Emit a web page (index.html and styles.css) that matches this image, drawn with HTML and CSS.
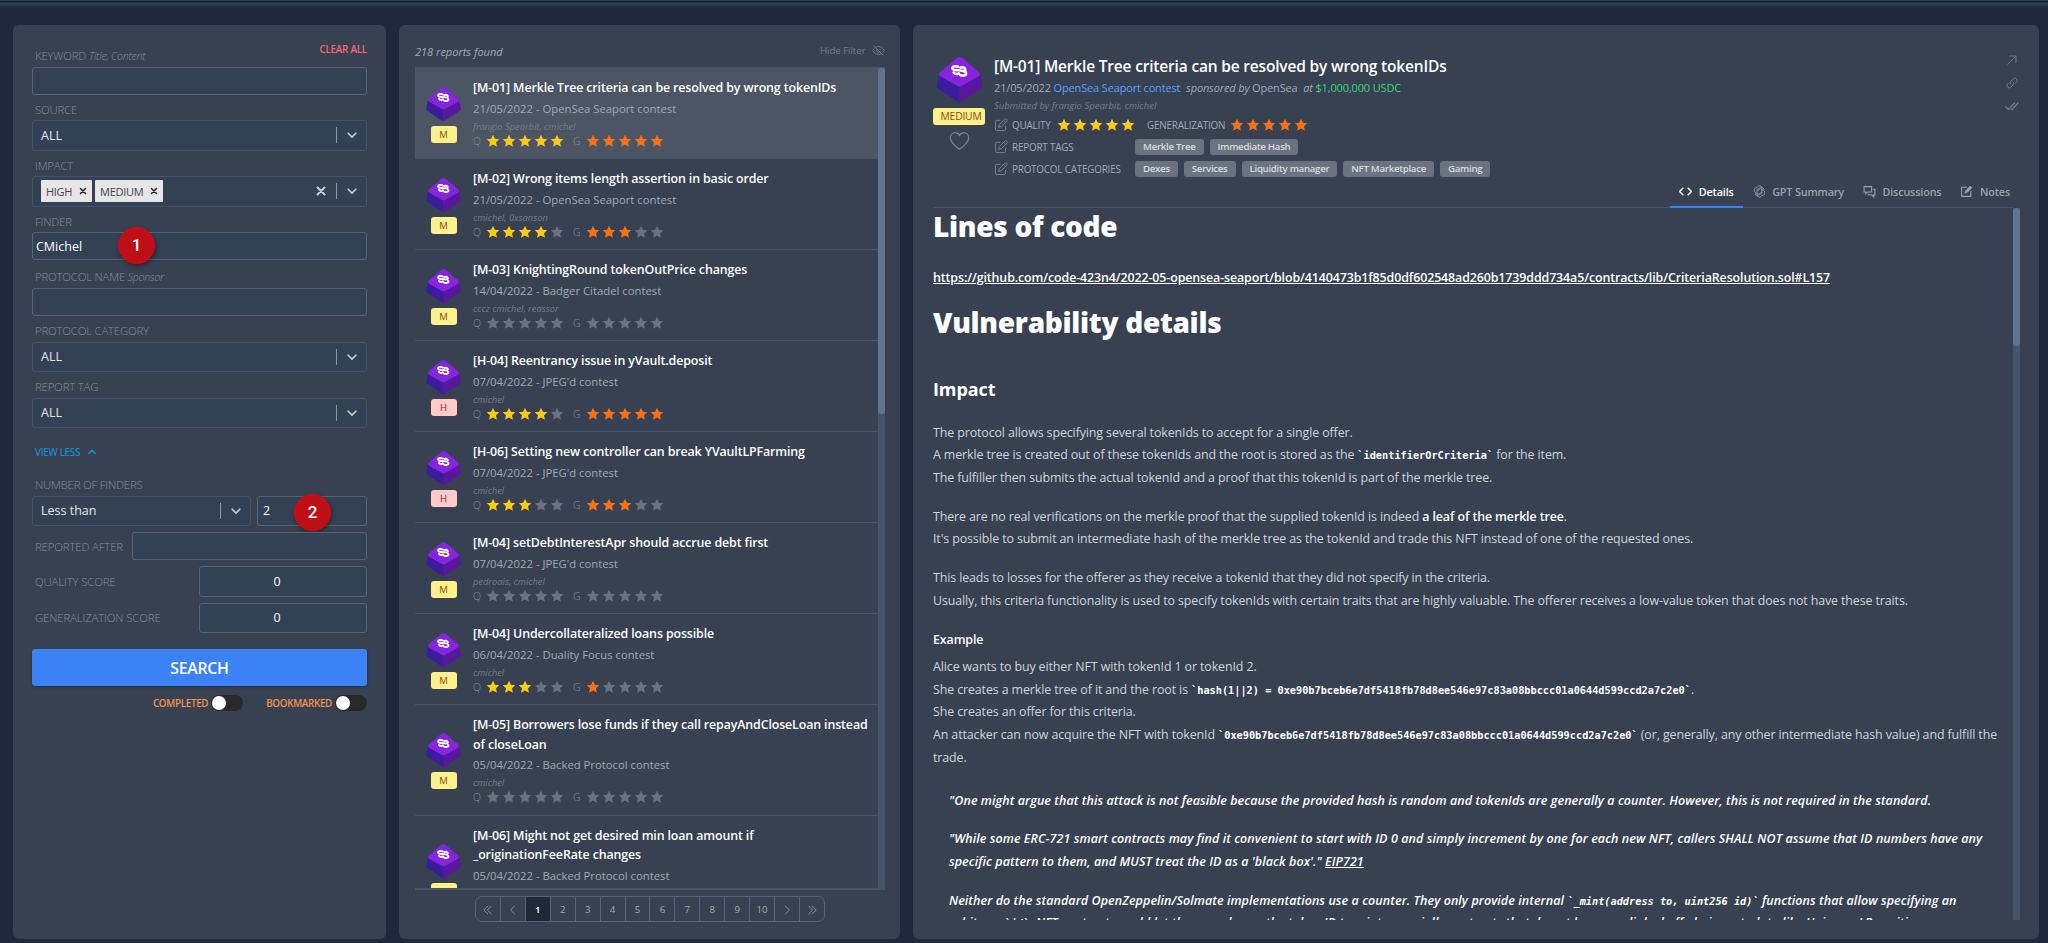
FILE: index.html
```html
<!DOCTYPE html>
<html lang="en">
<head>
    <meta charset="UTF-8">
    <meta name="viewport" content="width=device-width, initial-scale=1.0">
    <title>Reports</title>
    <link rel="stylesheet" href="styles.css">
</head>
<body>
    <!-- Icons -->
    <svg class="sprite">
        <symbol id="star" viewBox="0 0 24 24"><path d="M12 1.2l3.2 7 7.6.9-5.6 5.2 1.5 7.6L12 18.1l-6.7 3.8 1.5-7.6L1.2 9.1l7.6-.9z" stroke-linejoin="round"/></symbol>
        <symbol id="chevron" viewBox="0 0 20 20"><path d="M4.5 7.5L10 13l5.5-5.5" fill="none" stroke="currentColor" stroke-width="2.4" stroke-linecap="round"/></symbol>
        <symbol id="cross" viewBox="0 0 20 20"><path d="M5 5l10 10M15 5L5 15" fill="none" stroke="currentColor" stroke-width="3" stroke-linecap="round"/></symbol>
        <symbol id="edit" viewBox="0 0 24 24"><path d="M11 4H5a2.5 2.5 0 0 0-2.500 2.500V19A2.500 2.500 0 0 0 5 21.500h12.500A2.500 2.500 0 0 0 20 19v-6M8 16l1-4.500L18.500 2a2.300 2.300 0 0 1 3.500 3.500L12.500 15z" fill="none" stroke="currentColor" stroke-width="1.6" stroke-linejoin="round"/><path d="M16.500 4l3.500 3.500" stroke="currentColor" stroke-width="1.500"/></symbol>
        <symbol id="cube" viewBox="0 0 35 34">
            <path d="M2 13.500L17.500 22v12q-1 0-2-.7L1.200 23.800q-1.200-.8-1-2.200z" fill="#3b1c9c"/>
            <path d="M33 13.500L17.500 22v12q1 0 2-.7l14.300-9.500q1.200-.8 1-2.200z" fill="#58179c"/>
            <path d="M15.700.6q1.800-1.200 3.600 0l13 11q1.400 1.400 0 2.800L19 22q-1.500.8-3 0L2.700 14.400q-1.400-1.400 0-2.800z" fill="#8724e0"/>
            <path d="M16.500 7.400c-1.800-.9-4.400-.4-4.400 1.100 0 1.700 3 1.300 5.400 1.600 2.600.2 5 .3 5 2.300 0 1.600-2.400 2-4.400 1.300M13 11.700c.8 1.400 2.800 1.600 4 .6M18.200 8c1.700-.7 3.300-.1 3.700 1.200" fill="none" stroke="#fff" stroke-width="1.900" stroke-linecap="round"/>
        </symbol>
    </svg>

    <div class="topbar"></div>

    <main class="layout">
        <!-- Filters -->
        <section class="panel filters">
            <div class="label first"><span>KEYWORD <em>Title, Content</em></span><a class="clear">CLEAR ALL</a></div>
            <div class="input"></div>
            <div class="label">SOURCE</div>
            <div class="select"><span>ALL</span><i class="sep"></i><svg><use href="#chevron"/></svg></div>
            <div class="label">IMPACT</div>
            <div class="select">
                <span class="chips"><b>HIGH<svg><use href="#cross"/></svg></b><b>MEDIUM<svg><use href="#cross"/></svg></b></span>
                <svg class="reset"><use href="#cross"/></svg><i class="sep"></i><svg><use href="#chevron"/></svg>
            </div>
            <div class="label">FINDER</div>
            <div class="input">CMichel<span class="marker marker-one">1</span></div>
            <div class="label sponsor"><span>PROTOCOL NAME <em>Sponsor</em></span></div>
            <div class="input"></div>
            <div class="label">PROTOCOL CATEGORY</div>
            <div class="select"><span>ALL</span><i class="sep"></i><svg><use href="#chevron"/></svg></div>
            <div class="label">REPORT TAG</div>
            <div class="select"><span>ALL</span><i class="sep"></i><svg><use href="#chevron"/></svg></div>
            <a class="view-less">VIEW LESS <svg><use href="#chevron"/></svg></a>
            <div class="label">NUMBER OF FINDERS</div>
            <div class="row">
                <div class="select less"><span>Less than</span><i class="sep"></i><svg><use href="#chevron"/></svg></div>
                <div class="input count">2<span class="marker marker-two">2</span></div>
            </div>
            <div class="row after"><span class="name">REPORTED AFTER</span><div class="input"></div></div>
            <div class="row score"><span class="name">QUALITY SCORE</span><div class="input">0</div></div>
            <div class="row score"><span class="name">GENERALIZATION SCORE</span><div class="input">0</div></div>
            <button class="search">SEARCH</button>
            <div class="toggles">
                <label>COMPLETED<i></i></label>
                <label>BOOKMARKED<i></i></label>
            </div>
        </section>

        <!-- Report list -->
        <section class="panel reports">
            <div class="reports-head">
                <em>218 reports found</em>
                <span>Hide Filter <svg viewBox="0 0 24 24"><path d="M4 8c-1 1.200-2 2.600-2.500 4 2 4.500 6 7.500 10.500 7.500 2 0 3.800-.5 5.400-1.500M8 5.200c1.300-.5 2.600-.7 4-.7 4.500 0 8.500 3 10.500 7.500-.6 1.400-1.500 2.700-2.600 3.800M3 3l18 18M9.500 9.500a3.500 3.500 0 0 0 5 5M14 9a3.500 3.500 0 0 1 1.500 2.500" fill="none" stroke="currentColor" stroke-width="1.700"/></svg></span>
            </div>
            <div class="scroller list-scroller">
                <div class="list" id="list"></div>
                <div class="scrollbar"><div class="thumb"></div></div>
            </div>
            <div class="pages">
                <span><svg viewBox="0 0 20 20"><path d="M10 3l-7 7 7 7M16 3l-7 7 7 7"/></svg></span>
                <span><svg viewBox="0 0 20 20"><path d="M13 3l-7 7 7 7"/></svg></span>
                <span class="current">1</span><span>2</span><span>3</span><span>4</span><span>5</span><span>6</span><span>7</span><span>8</span><span>9</span><span>10</span>
                <span><svg viewBox="0 0 20 20"><path d="M7 3l7 7-7 7"/></svg></span>
                <span><svg viewBox="0 0 20 20"><path d="M4 3l7 7-7 7M10 3l7 7-7 7"/></svg></span>
            </div>
        </section>

        <!-- Report detail -->
        <section class="panel detail">
            <header class="detail-head">
                <div class="side">
                    <svg class="big-cube"><use href="#cube"/></svg>
                    <span class="badge">MEDIUM</span>
                    <svg class="heart" viewBox="0 0 24 22"><path d="M12 20.500C6 16 1.500 12 1.500 7.500c0-3.500 2.500-6 5.500-6 2.200 0 4 1.300 5 3.300 1-2 2.800-3.300 5-3.300 3 0 5.500 2.500 5.500 6 0 4.500-4.500 8.500-10.500 13z"/></svg>
                </div>
                <div class="info">
                    <h2>[M-01] Merkle Tree criteria can be resolved by wrong tokenIDs</h2>
                    <p class="meta">21/05/2022 <a>OpenSea Seaport contest</a> <em>sponsored by</em> OpenSea <em class="at">at</em> <strong>$1,000,000 USDC</strong></p>
                    <p class="authors">Submitted by frangio Spearbit, cmichel</p>
                    <div class="attr">
                        <svg class="edit"><use href="#edit"/></svg><span class="quality">QUALITY</span><span class="stars" data-score="5"></span>
                        <span class="general">GENERALIZATION</span><span class="stars orange" data-score="5"></span>
                    </div>
                    <div class="attr">
                        <svg class="edit"><use href="#edit"/></svg><span class="attr-name">REPORT TAGS</span>
                        <b>Merkle Tree</b><b>Immediate Hash</b>
                    </div>
                    <div class="attr">
                        <svg class="edit"><use href="#edit"/></svg><span class="attr-name">PROTOCOL CATEGORIES</span>
                        <b>Dexes</b><b>Services</b><b>Liquidity manager</b><b>NFT Marketplace</b><b>Gaming</b>
                    </div>
                </div>
                <div class="actions">
                    <svg viewBox="0 0 24 24"><path d="M3 21L20 4M6 4h14v14"/></svg>
                    <svg viewBox="0 0 24 24"><path d="M10 14.500a4.600 4.600 0 0 1 0-6.500l4.500-4.500a4.600 4.600 0 0 1 6.500 6.500l-3 3M14 9.500a4.600 4.600 0 0 1 0 6.500l-4.500 4.500A4.600 4.600 0 0 1 3 14l3-3"/></svg>
                    <svg class="checks" viewBox="0 0 28 24"><path d="M1 13l6 6L20 5M12 18l2 1.500L27 5"/></svg>
                </div>
            </header>
            <nav class="tabs">
                <a class="active"><svg viewBox="0 0 24 24"><path d="M8 5l-7 7 7 7M16 5l7 7-7 7" stroke-width="2.500"/></svg>Details</a>
                <a><svg viewBox="0 0 24 24"><path d="M12 22.500a4.500 4.500 0 0 1-4.500-4.500v-7l5-3M7.500 11V8.500l6-3.400a4.500 4.500 0 0 1 6.700 4"/><path d="M12 1.500A4.500 4.500 0 0 1 16.500 6v7l-5 3M16.500 13v2.500l-6 3.400a4.500 4.500 0 0 1-6.700-4"/><path d="M3 7.500a4.500 4.500 0 0 1 4.500-3M3 7.500c-1.500 2.500-.8 5 1 6.300l6.500 3.500M21 16.500a4.500 4.500 0 0 1-4.500 3M21 16.500c1.500-2.500.8-5-1-6.300l-6.500-3.500M7.500 5c.8-2.200 2.600-3.500 4.500-3.500M16.500 19c-.8 2.200-2.600 3.500-4.500 3.500"/></svg>GPT Summary</a>
                <a><svg viewBox="0 0 24 24"><path d="M2 3h14v10H8l-3 3v-3H2zM19 8h3v10h-2v4l-4-4h-6v-2" stroke-width="2"/></svg>Discussions</a>
                <a class="notes"><svg viewBox="0 0 24 24"><path d="M13 4H3v17h17V11" stroke-width="2"/><path d="M9 15l1-4L19 2l3 3-9 9z" fill="currentColor"/></svg>Notes</a>
            </nav>
            <div class="scroller detail-scroller">
                <article class="content">
                    <h1>Lines of code</h1>
                    <p class="source"><a>https://github.com/code-423n4/2022-05-opensea-seaport/blob/4140473b1f85d0df602548ad260b1739ddd734a5/contracts/lib/CriteriaResolution.sol#L157</a></p>
                    <h1>Vulnerability details</h1>
                    <h3>Impact</h3>
                    <p>The protocol allows specifying several tokenIds to accept for a single offer.<br>
                    A merkle tree is created out of these tokenIds and the root is stored as the <code>`identifierOrCriteria`</code> for the item.<br>
                    The fulfiller then submits the actual tokenId and a proof that this tokenId is part of the merkle tree.</p>
                    <p>There are no real verifications on the merkle proof that the supplied tokenId is indeed <b>a leaf of the merkle tree</b>.<br>
                    It's possible to submit an intermediate hash of the merkle tree as the tokenId and trade this NFT instead of one of the requested ones.</p>
                    <p>This leads to losses for the offerer as they receive a tokenId that they did not specify in the criteria.<br>
                    Usually, this criteria functionality is used to specify tokenIds with certain traits that are highly valuable. The offerer receives a low-value token that does not have these traits.</p>
                    <h4>Example</h4>
                    <p>Alice wants to buy either NFT with tokenId 1 or tokenId 2.<br>
                    She creates a merkle tree of it and the root is <code>`hash(1||2) = 0xe90b7bceb6e7df5418fb78d8ee546e97c83a08bbccc01a0644d599ccd2a7c2e0`</code>.<br>
                    She creates an offer for this criteria.<br>
                    An attacker can now acquire the NFT with tokenId <code>`0xe90b7bceb6e7df5418fb78d8ee546e97c83a08bbccc01a0644d599ccd2a7c2e0`</code> (or, generally, any other intermediate hash value) and fulfill the<br>trade.</p>
                    <blockquote>
                        <p>"One might argue that this attack is not feasible because the provided hash is random and tokenIds are generally a counter. However, this is not required in the standard.</p>
                        <p>"While some ERC-721 smart contracts may find it convenient to start with ID 0 and simply increment by one for each new NFT, callers SHALL NOT assume that ID numbers have any<br>specific pattern to them, and MUST treat the ID as a 'black box'." <a>EIP721</a></p>
                        <p>Neither do the standard OpenZeppelin/Solmate implementations use a counter. They only provide internal <code>`_mint(address to, uint256 id)`</code> functions that allow specifying an<br>arbitrary <code>`id`</code>. NFT contracts could let the user choose the token ID to mint, especially contracts that do not have any linked off-chain metadata like Uniswap LP positions.</p>
                    </blockquote>
                </article>
                <div class="scrollbar"><div class="thumb"></div></div>
            </div>
        </section>
    </main>

    <script src="script.js"></script>
</body>
</html>
```
FILE: styles.css
```css
* {
    margin: 0;
    padding: 0;
    box-sizing: border-box;
}

body {
    background: #1e293b;
    color: #d1d5db;
    font-family: "Open Sans", "Noto Sans", sans-serif;
    font-size: 12.5px;
    height: 943px;
    overflow: hidden;
}

.sprite {
    display: none;
}

.topbar {
    height: 8px;
    background: linear-gradient(#29384b 0 1px, #172235 1px 2px, #30445a 3px, #1e293b 8px);
}

.layout {
    display: flex;
    gap: 13px;
    padding: 17px 9px 0 13px;
}

.panel {
    height: 914px;
    background: #374151;
    border-radius: 6px;
}

/* Filters */
.filters {
    width: 373px;
    padding: 16px 19px 0;
    display: flex;
    flex-direction: column;
}

.label {
    height: 25.8px;
    padding: 4px 0 0 3px;
    line-height: 21px;
    font-size: 11.4px;
    font-weight: 300;
    color: #858e9c;
    letter-spacing: -0.2px;
    display: flex;
    justify-content: space-between;
    flex-shrink: 0;
}

.label em {
    font-size: 10.5px;
}

.label.sponsor {
    height: 28px;
    padding-top: 6px;
}

.clear {
    color: #f26b6f;
    font-size: 9.8px;
    font-weight: 600;
    line-height: 9px;
}

.input, .select {
    background: #334155;
    border: 1px solid #566479;
    border-radius: 3px;
    height: 27.8px;
    display: flex;
    align-items: center;
    color: #fff;
    flex-shrink: 0;
}

.input {
    position: relative;
    padding-left: 3px;
}

.select {
    height: 30.2px;
    border-color: #43536a;
    padding: 0 7px 0 8px;
    color: #e5e7eb;
}

.select span {
    flex: 1;
}

.select svg {
    width: 14px;
    height: 14px;
    color: #ccc;
}

.sep {
    width: 1px;
    height: 16px;
    background: #8e99a8;
    margin-right: 8px;
}

.select .reset {
    width: 14px;
    height: 14px;
    margin-right: 8px;
}

.chips {
    display: flex;
    gap: 3px;
}

.chips b {
    height: 22px;
    padding: 0 4px 0 5px;
    background: #e6e6e6;
    color: #444;
    font-size: 11px;
    font-weight: 400;
    letter-spacing: -0.3px;
    display: flex;
    align-items: center;
    gap: 6px;
    border-radius: 1px;
}

.chips b svg {
    width: 10px;
    height: 10px;
    color: #222;
}

.marker {
    position: absolute;
    width: 37px;
    height: 37px;
    border-radius: 50%;
    background: #bd0f15;
    border: 1px solid #e3070f;
    box-shadow: 1px 2px 4px rgba(0, 0, 0, 0.4);
    font: 500 17px/34px Roboto, sans-serif;
    text-align: center;
}

.marker-one {
    left: 85px;
    top: -6px;
}

.marker-two {
    left: 36px;
    top: -3px;
}

.view-less {
    height: 42px;
    padding: 14px 0 0 3px;
    line-height: 21px;
    color: #1597e5;
    font-size: 10px;
    letter-spacing: -0.3px;
}

.view-less svg {
    width: 12px;
    height: 12px;
    margin-left: 4px;
    vertical-align: -2px;
    transform: rotate(180deg);
}

.row {
    display: flex;
    align-items: center;
    justify-content: space-between;
}

.less {
    width: 219px;
}

.count {
    width: 110px;
    height: 30.2px;
    padding-left: 5px;
}

.name {
    padding-left: 3px;
    font-size: 11.4px;
    font-weight: 300;
    color: #858e9c;
    letter-spacing: -0.15px;
}

.after {
    margin-top: 6.5px;
}

.after .input {
    width: 235px;
}

.score {
    margin-top: 5.8px;
}

.score .input {
    width: 168px;
    height: 30.8px;
    justify-content: center;
    padding-right: 12px;
    padding-left: 0;
}

.search {
    margin-top: 16px;
    height: 37px;
    flex-shrink: 0;
    border: none;
    border-radius: 3px;
    background: #3b82f6;
    color: #fff;
    font-family: inherit;
    font-size: 15.8px;
    font-weight: 600;
    letter-spacing: -0.25px;
    box-shadow: 0 1px 3px rgba(0, 0, 0, 0.3);
}

.toggles {
    margin-top: 9px;
    display: flex;
    justify-content: flex-end;
    gap: 23px;
    color: #f5924e;
    font-size: 9.8px;
    font-weight: 600;
    letter-spacing: -0.3px;
}

.toggles label {
    display: flex;
    align-items: center;
    gap: 3px;
}

.toggles i {
    width: 32px;
    height: 16px;
    border-radius: 8px;
    background: #292929;
    padding: 1px;
}

.toggles i::before {
    content: "";
    display: block;
    width: 14px;
    height: 14px;
    border-radius: 50%;
    background: #fff;
}

/* Report list */
.reports {
    width: 501px;
    padding: 17px 15px 0 16px;
}

.reports-head {
    height: 25px;
    display: flex;
    justify-content: space-between;
    line-height: 20px;
    font-size: 11px;
    color: #a3aab6;
}

.reports-head span {
    font-size: 9.8px;
    line-height: 18px;
    letter-spacing: -0.1px;
    color: #757e8c;
}

.reports-head svg {
    width: 13px;
    height: 13px;
    margin-left: 4px;
    vertical-align: -3px;
}

.scroller {
    display: flex;
    overflow: hidden;
}

.list-scroller {
    height: 823px;
    border-bottom: 2px solid #475569;
    border-top: 1px solid #475569;
}

.scrollbar {
    width: 7px;
    background: #475569;
    flex-shrink: 0;
}

.thumb {
    background: #64748b;
    border-radius: 3px;
    height: 346px;
}

.list {
    flex: 1;
}

.item {
    display: flex;
    padding: 10px 8px 0 11px;
    border-bottom: 1px solid #475569;
}

.item.selected {
    background: #4b5563;
}

.item-side {
    width: 35px;
    margin-right: 12px;
    display: flex;
    flex-direction: column;
    align-items: center;
    justify-content: center;
    padding-bottom: 7px;
}

.item-side svg {
    width: 35px;
    height: 34px;
}

.badge {
    background: #fef08a;
    color: #854d0e;
    border-radius: 3px;
    text-align: center;
}

.item .badge {
    width: 26px;
    height: 17px;
    margin-top: 5px;
    line-height: 17px;
    font-size: 9.5px;
}

.item .badge.high {
    background: #fecaca;
    color: #991b1b;
}

.item-title {
    color: #fff;
    font-weight: 600;
    font-size: 12.4px;
    line-height: 19.5px;
    letter-spacing: -0.12px;
}

.item-date {
    margin-top: 1px;
    line-height: 20px;
    color: #a3aab6;
    font-size: 11.3px;
}

.item-authors {
    font-size: 9.3px;
    font-style: italic;
    line-height: 16px;
    color: #757e8c;
}

.item-rating {
    height: 12px;
    margin-bottom: 11.5px;
    display: flex;
    align-items: center;
    font-size: 10.5px;
    font-weight: 300;
    color: #858e9c;
}

.item-rating > span {
    width: 13px;
}

.item-rating .g {
    margin-left: 9px;
    width: 13px;
}

.stars {
    display: flex;
    gap: 2px;
}

.stars svg {
    width: 14px;
    height: 14px;
    fill: #6b7280;
}

.stars svg.on {
    fill: #facc15;
}

.stars.orange svg.on {
    fill: #f97316;
}

.pages {
    margin: 6px 0 0 60px;
    width: 350px;
    height: 26px;
    border: 1px solid #56657b;
    border-radius: 7px;
    overflow: hidden;
    display: flex;
    font-size: 9.7px;
    color: #a3aab6;
}

.pages span {
    flex: 1;
    display: flex;
    align-items: center;
    justify-content: center;
    border-left: 1px solid #56657b;
    padding-top: 1px;
}

.pages span:first-child {
    border-left: none;
}

.pages svg {
    width: 12px;
    height: 12px;
    fill: none;
    stroke: #8b95a4;
    stroke-width: 1.6;
}

.pages .current {
    background: #1f2937;
    color: #fff;
    font-weight: 600;
}

/* Report detail */
.detail {
    width: 1126px;
    padding: 25px 19px 0 20px;
}

.detail-head {
    display: flex;
    height: 131px;
}

.side {
    width: 52px;
    margin-right: 9px;
    display: flex;
    flex-direction: column;
    align-items: center;
    padding-top: 7px;
}

.big-cube {
    width: 47px;
    height: 45px;
}

.side .badge {
    width: 52px;
    height: 17px;
    margin-top: 6px;
    line-height: 17px;
    padding-left: 4px;
    font-size: 10.3px;
    letter-spacing: -0.2px;
}

.heart {
    width: 21px;
    height: 20px;
    margin-top: 6px;
    fill: none;
    stroke: #7b8492;
    stroke-width: 1.5;
}

.info {
    flex: 1;
}

.info h2 {
    margin-top: 4px;
    color: #fff;
    font-size: 15.5px;
    font-weight: 600;
    line-height: 24px;
    letter-spacing: -0.18px;
}

.meta {
    line-height: 19px;
    font-size: 11px;
    letter-spacing: -0.15px;
    color: #a3aab6;
}

.meta a {
    color: #5aa2f8;
    margin-right: 3px;
}

.meta strong {
    color: #3fd673;
    font-weight: 400;
}

.meta .at {
    margin-left: 3px;
}

.authors {
    line-height: 17px;
    font-size: 9.5px;
    font-style: italic;
    color: #757e8c;
}

.attr {
    height: 22px;
    display: flex;
    align-items: center;
    font-size: 9.9px;
    color: #a3aab6;
    letter-spacing: -0.2px;
}

.edit {
    width: 14px;
    height: 14px;
    color: #7b8492;
    margin-right: 4px;
}

.quality {
    width: 45px;
}

.general {
    width: 83px;
    margin-left: 12px;
}

.attr-name {
    width: 123px;
}

.attr b {
    height: 16px;
    line-height: 16px;
    padding: 0 8px;
    margin-right: 6px;
    background: #6b7280;
    border-radius: 3px;
    color: #d9dce1;
    font-size: 9.7px;
    letter-spacing: -0.3px;
    font-weight: 600;
}

.actions {
    width: 14px;
    display: flex;
    flex-direction: column;
    align-items: center;
    gap: 11px;
    padding-top: 4px;
    margin-right: 1px;
}

.actions svg {
    width: 12px;
    height: 12px;
    fill: none;
    stroke: #757e8c;
    stroke-width: 1.8;
    overflow: visible;
}

.actions .checks {
    width: 14px;
    stroke-width: 2.5;
}

.tabs {
    height: 27px;
    display: flex;
    justify-content: flex-end;
    border-bottom: 1px solid #475569;
    font-size: 10.8px;
    font-weight: 600;
    color: #9ca3af;
    margin-right: 7px;
}

.tabs a {
    height: 27px;
    padding: 0 9.5px 6px;
    display: flex;
    align-items: center;
    white-space: nowrap;
    letter-spacing: -0.15px;
}

.tabs svg {
    width: 13px;
    height: 13px;
    margin-right: 6.5px;
    fill: none;
    stroke: currentColor;
    stroke-width: 1.5;
    flex-shrink: 0;
}

.tabs .active {
    color: #fff;
    border-bottom: 2px solid #3b82f6;
    padding-bottom: 4px;
}

.tabs .notes {
    padding-right: 3px;
}

.detail-scroller {
    height: 712px;
}

.detail-scroller .thumb {
    height: 138px;
}

.content {
    flex: 1;
    font-size: 12.4px;
    line-height: 22.6px;
    letter-spacing: -0.1px;
    white-space: nowrap;
    overflow: hidden;
}

.content h1 {
    color: #fff;
    font-size: 28px;
    font-weight: 800;
    line-height: 36px;
    letter-spacing: -0.3px;
}

.content .source {
    margin: 23px 0 14px;
    color: #fff;
    font-weight: 600;
}

.content a {
    text-decoration: underline;
}

.content h3 {
    color: #fff;
    font-size: 18px;
    font-weight: 700;
    line-height: 28px;
    margin: 35px 0 19px;
}

.content p {
    margin-bottom: 16.2px;
}

.content h4 {
    color: #fff;
    font-size: 12.4px;
    font-weight: 600;
    line-height: 20px;
    margin: 18px 0 6px;
}

.content b {
    color: #fff;
    font-weight: 600;
}

.content code {
    color: #fff;
    font: bold 10.25px/10px "DejaVu Sans Mono", monospace;
    letter-spacing: 0;
}

blockquote {
    margin-top: 20.5px;
    padding-left: 16px;
    color: #fff;
    font-size: 12.5px;
    font-style: italic;
    font-weight: 600;
    letter-spacing: 0.07px;
}

.content blockquote code {
    font-style: italic;
}
```
FILE: script.js
```js
const reports = [
    { id: "M-01", title: "Merkle Tree criteria can be resolved by wrong tokenIDs", date: "21/05/2022", contest: "OpenSea Seaport", authors: "frangio Spearbit, cmichel", q: 5, g: 5 },
    { id: "M-02", title: "Wrong items length assertion in basic order", date: "21/05/2022", contest: "OpenSea Seaport", authors: "cmichel, 0xsanson", q: 4, g: 3 },
    { id: "M-03", title: "KnightingRound tokenOutPrice changes", date: "14/04/2022", contest: "Badger Citadel", authors: "cccz cmichel, reassor", q: 0, g: 0 },
    { id: "H-04", title: "Reentrancy issue in yVault.deposit", date: "07/04/2022", contest: "JPEG'd", authors: "cmichel", q: 4, g: 5 },
    { id: "H-06", title: "Setting new controller can break YVaultLPFarming", date: "07/04/2022", contest: "JPEG'd", authors: "cmichel", q: 3, g: 3 },
    { id: "M-04", title: "setDebtInterestApr should accrue debt first", date: "07/04/2022", contest: "JPEG'd", authors: "pedroais, cmichel", q: 0, g: 0 },
    { id: "M-04", title: "Undercollateralized loans possible", date: "06/04/2022", contest: "Duality Focus", authors: "cmichel", q: 3, g: 1 },
    { id: "M-05", title: "Borrowers lose funds if they call repayAndCloseLoan instead of closeLoan", date: "05/04/2022", contest: "Backed Protocol", authors: "cmichel", q: 0, g: 0 },
    { id: "M-06", title: "Might not get desired min loan amount if _originationFeeRate changes", date: "05/04/2022", contest: "Backed Protocol", authors: "cmichel", q: 0, g: 0 }
];

function stars(score) {
    let html = "";
    for (let i = 0; i < 5; i++) {
        html += `<svg class="${i < score ? "on" : ""}"><use href="#star"/></svg>`;
    }
    return html;
}

document.getElementById("list").innerHTML = reports.map((r, i) => `
    <div class="item ${i === 0 ? "selected" : ""}">
        <div class="item-side">
            <svg><use href="#cube"/></svg>
            <span class="badge ${r.id[0] === "H" ? "high" : ""}">${r.id[0]}</span>
        </div>
        <div>
            <div class="item-title">[${r.id}] ${r.title}</div>
            <div class="item-date">${r.date} - ${r.contest} contest</div>
            <div class="item-authors">${r.authors}</div>
            <div class="item-rating">
                <span>Q</span><div class="stars">${stars(r.q)}</div>
                <span class="g">G</span><div class="stars orange">${stars(r.g)}</div>
            </div>
        </div>
    </div>`).join("");

document.querySelectorAll("[data-score]").forEach(el => {
    el.innerHTML = stars(Number(el.dataset.score));
});
```
